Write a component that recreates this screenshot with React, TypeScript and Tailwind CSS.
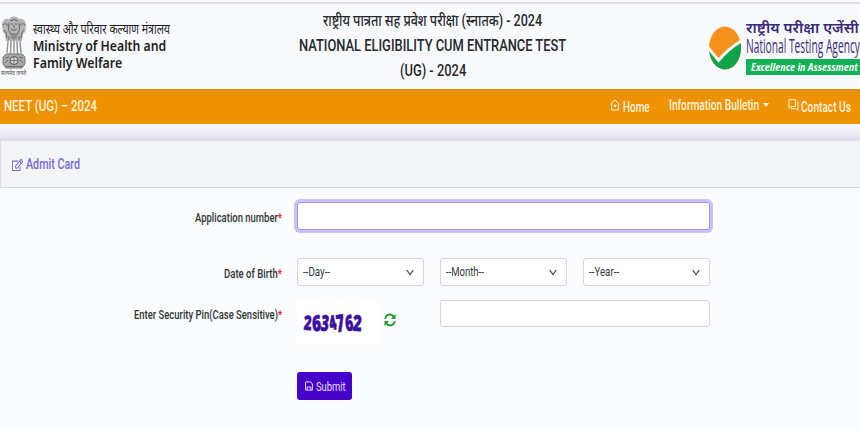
import { useLayoutEffect, useRef, useState } from "react"
import { FaRegEdit } from "react-icons/fa"

type FitProps = {
  width: number
  children: React.ReactNode
  className?: string
}

// One line of text, condensed to the given width
const Fit: React.FC<FitProps> = ({ width, children, className = "" }) => {
  const ref = useRef<HTMLSpanElement>(null)
  const [scale, setScale] = useState(1)

  useLayoutEffect(() => {
    if (ref.current) {
      setScale(width / ref.current.offsetWidth)
    }
  }, [width])

  return (
    <span className={`block shrink-0 ${className}`} style={{ width }}>
      <span
        ref={ref}
        className="inline-block align-top whitespace-nowrap origin-left"
        style={{ transform: `scaleX(${scale})` }}
      >
        {children}
      </span>
    </span>
  )
}

const Emblem: React.FC = () => (
  <svg className="block w-[26px] h-[53px]" viewBox="0 0 26 53" fill="none">
    <path
      d="M8 3 Q10 0 13 .5 Q16 0 18 3 Q22 2 24 5 Q26 9 24.500 12 Q25 16 22 18 L21 25 H5 L4 18 Q1 16 1.500 12 Q0 9 2 5 Q4 2 8 3Z"
      fill="#b3b3b3"
    />
    <path
      d="M9 5 Q13 2 17 5 M8 7 Q6 14 10 19 M18 7 Q20 14 16 19 M10 8 H12 M14 8 H16 M13 9 V12 M10 13 Q13 16 16 13 M2 9 Q5 6 7 10 M24 9 Q21 6 19 10 M3 14 Q6 16 6 22 M23 14 Q20 16 20 22 M11 17 V23 M13 17 V24 M15 17 V23 M8 20 V24 M18 20 V24"
      stroke="#606060"
      strokeWidth=".9"
    />
    <path
      d="M7 25 L6 37 M10 25 L9.500 38 M13 25 V37 M16 25 L16.500 38 M19 25 L20 37"
      stroke="#969696"
      strokeWidth="1.5"
    />
    <path d="M5 38 H21 L24 41 V48 L21 52 H5 L2 48 V41Z" fill="#a8a8a8" stroke="#777" />
    <circle cx="13" cy="44.500" r="4" fill="#ddd" stroke="#555" />
    <path
      d="M13 41 V48 M9.500 44.500 H16.500 M4 42 L8 41 M18 41 L22 42 M4 47 L7 44 M19 44 L22 47 M5 50.500 H21"
      stroke="#666"
      strokeWidth=".9"
    />
  </svg>
)

const AgencyMark: React.FC = () => (
  <svg className="block w-[34px] h-[44px]" viewBox="0 0 34 44">
    <clipPath id="mark">
      <ellipse cx="17" cy="22" rx="16" ry="21.500" />
    </clipPath>
    <ellipse cx="17" cy="22" rx="16" ry="21.500" fill="#f5921e" />
    <path d="M0 23 L10.500 36 Q20 23 34 15 V44 H0Z" fill="#0fa34b" clipPath="url(#mark)" />
    <path d="M0 21.500 L10.500 34.500 Q20 23 34 14.500" fill="none" stroke="#fbfcfe" strokeWidth="2.800" />
  </svg>
)

const HomeIcon: React.FC = () => (
  <svg className="block w-[10px] h-[12px]" viewBox="0 0 10 12" fill="none" stroke="currentColor">
    <path d="M.6 5.400 L5 .9 L9.400 5.400 M1.600 5 V11 H8.400 V5" />
    <circle cx="5" cy="6.800" r="1.400" fill="currentColor" stroke="none" />
  </svg>
)

const ChatIcon: React.FC = () => (
  <svg className="block w-[11px] h-[12px]" viewBox="0 0 11 12" fill="none" stroke="currentColor">
    <path d="M1 .7 H7.500 V7.500 H2.800 L1 9.300Z M9 3 H10 V11.500 L8.200 9.700 H3.500 V8.700" />
  </svg>
)

const SaveIcon: React.FC = () => (
  <svg className="block w-[8px] h-[10px]" viewBox="0 0 8 10" fill="none" stroke="currentColor">
    <path d="M.6 .9 H5.600 L7.400 3 V9.100 H.6Z M2.200 9 V6 H5.800 V9" />
  </svg>
)

const RefreshIcon: React.FC = () => (
  <svg className="block w-[12px] h-[14px] text-[#1f9a2b]" viewBox="0 0 12 14">
    <path
      d="M1.200 5.800 C2 1 7.500 .2 9.800 3.700 M10.800 8.200 C10 13 4.500 13.800 2.200 10.300"
      fill="none"
      stroke="currentColor"
      strokeWidth="1.800"
    />
    <path d="M11.500 .8 V5.900 H7Z M.5 13.200 V8.100 H5Z" fill="currentColor" />
  </svg>
)

const Header: React.FC = () => (
  <header className="h-[89px] pt-[2px] bg-[#fdfdfe]">
    <div className="h-[87px] flex items-start border-t-2 border-[#dcdee1] bg-[#f9fafd]">
      <div className="w-[33px] pl-px pt-[12px]">
        <Emblem />
        <Fit width={25} className="mt-[1px] text-[6px] leading-[7px] text-[#555] font-['Noto_Sans',sans-serif]">
          सत्यमेव जयते
        </Fit>
      </div>
      <div className="w-[266px] pt-[16px] text-[15px] leading-[17px] font-semibold text-[#1d1d1f] font-['Noto_Sans',sans-serif]">
        <Fit width={137} className="text-[14px] font-normal">
          स्वास्थ्य और परिवार कल्याण मंत्रालय
        </Fit>
        <Fit width={133}>Ministry of Health and</Fit>
        <Fit width={89}>Family Welfare</Fit>
      </div>
      <div className="w-[267px] pt-[4px] flex flex-col items-center text-[16px] leading-[25px] font-medium text-[#25292d]">
        <Fit width={219}>राष्ट्रीय पात्रता सह प्रवेश परीक्षा (स्नातक) - 2024</Fit>
        <Fit width={267}>NATIONAL ELIGIBILITY CUM ENTRANCE TEST</Fit>
        <Fit width={66}>(UG) - 2024</Fit>
      </div>
      <div className="ml-auto flex w-[152px] pt-[14px]">
        <div className="w-[38px] pt-[8px]">
          <AgencyMark />
        </div>
        <div className="w-[114px] text-[#3b2a75] font-['Noto_Sans',sans-serif]">
          <Fit width={113} className="h-[18px] text-[14.5px] leading-[18px] font-semibold">
            राष्ट्रीय परीक्षा एजेंसी
          </Fit>
          <Fit width={114} className="h-[23px] text-[20px] leading-[20px] font-medium font-['Open_Sans',sans-serif]">
            National Testing Agency
          </Fit>
          <div className="h-[16px] pl-[5px] bg-[#12b155] text-white">
            <Fit width={107} className="text-[10px] leading-[16px] font-bold italic">
              Excellence in Assessment
            </Fit>
          </div>
        </div>
      </div>
    </div>
  </header>
)

const Navbar: React.FC = () => (
  <nav className="h-[35px] flex items-start bg-[#ed9203] border-t border-[#dc8d17] text-[#fff3dc] text-[14px] font-medium">
    <Fit width={93} className="ml-1 mt-[6px] text-[15.5px] leading-[20px]">
      NEET (UG) – 2024
    </Fit>
    <div className="ml-auto flex items-start pr-[9px] leading-[20px]">
      <a className="flex gap-[3px]">
        <span className="pt-[9px]">
          <HomeIcon />
        </span>
        <Fit width={27} className="mt-[7px]">
          Home
        </Fit>
      </a>
      <a className="ml-[19px] flex">
        <Fit width={90} className="mt-[5px]">
          Information Bulletin
        </Fit>
        <span className="ml-[4px] mt-[13px] size-0 border-x-[3px] border-t-[4px] border-x-transparent" />
      </a>
      <a className="ml-[19px] flex gap-[2px]">
        <span className="pt-[9px]">
          <ChatIcon />
        </span>
        <Fit width={50} className="mt-[7px]">
          Contact Us
        </Fit>
      </a>
    </div>
  </nav>
)

const Label: React.FC<FitProps> = ({ width, children, className = "" }) => (
  <div className={`w-[282px] flex justify-end text-[13.5px] leading-[20px] font-medium text-[#2f3438] ${className}`}>
    <Fit width={width}>
      {children}
      <span className="text-[#f0141e]">*</span>
    </Fit>
  </div>
)

const Select: React.FC<{ label: string; width: number }> = ({ label, width }) => (
  <div className="w-[127px] h-[28px] flex items-center justify-between rounded-[3px] border border-[#d3d7dd] bg-white pl-[5px] pr-[9px] text-[13px] text-[#33383d]">
    <Fit width={width}>{label}</Fit>
    <svg className="w-[8px] h-[7px]" viewBox="0 0 8 7" fill="none" stroke="#4a4f54" strokeWidth="1.300">
      <path d="M.8 1 L4 5.700 L7.200 1" />
    </svg>
  </div>
)

const Captcha: React.FC = () => (
  <div className="w-[81px] h-[45px] bg-white pl-[7px] pt-[14px]">
    <div className="flex items-start h-[17px] text-[22px] leading-[17px] font-black text-[#3d0ca0] font-['Noto_Sans',sans-serif] [-webkit-text-stroke:0.6px_#3d0ca0]">
      <Fit width={8} className="text-[20px] rotate-3">2</Fit>
      <Fit width={9} className="-rotate-3">6</Fit>
      <Fit width={8} className="rotate-6">3</Fit>
      <Fit width={7} className="text-[20px] -rotate-12">4</Fit>
      <Fit width={8} className="text-[24px] -rotate-6">7</Fit>
      <Fit width={8} className="-rotate-6 ml-px">6</Fit>
      <Fit width={9} className="rotate-3">2</Fit>
    </div>
  </div>
)

const AdmitCardForm: React.FC = () => (
  <div className="h-[242px] bg-[#fbfcfe] pt-[14px]">
    <div className="flex h-[56px]">
      <Label width={87} className="pt-[5px]">
        Application number
      </Label>
      <div className="ml-[15px] w-[413px] h-[28px] rounded-[3px] border border-[#a693e6] bg-white shadow-[0_0_0_3px_#cdc0f4]" />
    </div>
    <div className="flex h-[42px]">
      <Label width={58} className="pt-[5px]">
        Date of Birth
      </Label>
      <div className="ml-[15px] flex gap-4">
        <Select label="--Day--" width={27} />
        <Select label="--Month--" width={38} />
        <Select label="--Year--" width={30} />
      </div>
    </div>
    <div className="flex h-[72px]">
      <Label width={148} className="pt-[4px]">
        Enter Security Pin(Case Sensitive)
      </Label>
      <div className="ml-[15px] w-[143px] flex gap-[6px]">
        <Captcha />
        <div className="pt-[13px]">
          <RefreshIcon />
        </div>
      </div>
      <div className="w-[270px] h-[27px] rounded-[3px] border border-[#d3d7dd] bg-white" />
    </div>
    <button className="ml-[297px] flex items-center gap-[3px] w-[55px] h-[28px] pl-[8px] rounded-[3px] bg-[#4502c8] text-[13.5px] text-[#e6dcff]">
      <SaveIcon />
      <Fit width={30}>Submit</Fit>
    </button>
  </div>
)

const App: React.FC = () => {
  return (
    <div className="w-[860px] h-[430px] overflow-hidden bg-[#fbfcfe] font-[Roboto,'Noto_Sans',sans-serif]">
      <Header />
      <Navbar />
      <div className="h-[17px] bg-linear-to-b from-[#f8f8fc] via-[#eeecf7] to-[#dedaea]" />
      <main>
        <div className="h-[47px] flex items-center gap-[3px] border-b border-l border-b-[#d7d9e0] border-l-[#dedaea] bg-[#f3f4f6] pl-[11px] pt-[1px] text-[14.5px] text-[#766ad8] font-medium">
          <FaRegEdit preserveAspectRatio="none" className="w-[11px] h-[12px]" />
          <Fit width={54}>Admit Card</Fit>
        </div>
        <AdmitCardForm />
      </main>
    </div>
  )
}

export default App
